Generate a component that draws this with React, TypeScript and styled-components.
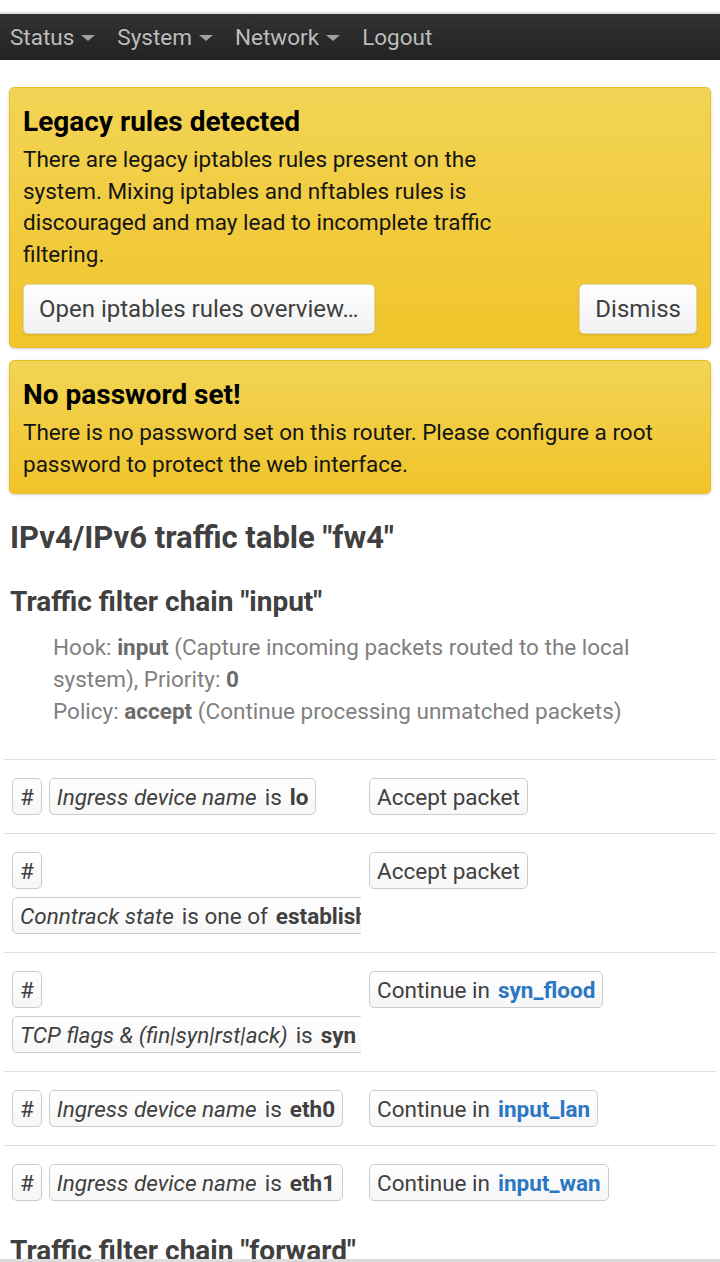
import React from 'react';
import styled, { createGlobalStyle } from 'styled-components';

// グローバルスタイル
const GlobalStyle = createGlobalStyle`
    html, body {
        margin: 0;
        padding: 0;
        background: #fff;
    }
    body {
        font-family: Roboto, "Liberation Sans", Arial, sans-serif;
        font-size: 22.5px;
        color: #404040;
    }
    * {
        box-sizing: border-box;
    }
`;

// ナビゲーション
const TopStrip = styled.div`
    height: 14px;
    background: #fff;
    border-bottom: 2px solid #e2e2e2;
`;

const NavBar = styled.nav`
    height: 46px;
    background: linear-gradient(#333333, #222222);
    display: flex;
    align-items: center;
    padding: 0 10px;
    gap: 22px;
`;

const NavItem = styled.a`
    color: #bdbdbd;
    font-size: 22.5px;
    text-decoration: none;
    display: flex;
    align-items: center;
    gap: 7px;
    text-shadow: 0 -1px 0 rgba(0, 0, 0, 0.25);
`;

const Caret = styled.span`
    display: inline-block;
    width: 0;
    height: 0;
    border-left: 7px solid transparent;
    border-right: 7px solid transparent;
    border-top: 6px solid #a0a0a0;
    margin-top: 2px;
`;

const Main = styled.main`
    padding: 27px 4px 0;
`;

// 警告
const Alert = styled.div`
    margin: 0 5px 12px;
    padding: 19px 13px 13px;
    background: linear-gradient(#f2d455, #f0c42a);
    border: 1px solid #e6bd2a;
    border-radius: 5px;
    box-shadow: 0 1px 3px rgba(0, 0, 0, 0.18);
    color: #151515;
`;

const AlertTitle = styled.h4`
    margin: 0 0 7px;
    font-size: 28px;
    line-height: 30px;
    font-weight: 700;
    color: #000;
`;

const AlertText = styled.p<{ $narrow?: boolean }>`
    margin: 0;
    line-height: 31.7px;
    max-width: ${(p) => (p.$narrow ? '520px' : 'none')};
`;

const AlertActions = styled.div`
    display: flex;
    justify-content: space-between;
    margin-top: 13px;
`;

const Button = styled.button`
    height: 50px;
    padding: 0 15px;
    font-family: inherit;
    font-size: 24px;
    color: #404040;
    background: linear-gradient(#ffffff, #f1f1f1);
    border: 1px solid #e0d7b5;
    border-radius: 5px;
    box-shadow: 0 1px 2px rgba(0, 0, 0, 0.12);
`;

// 見出し
const TableTitle = styled.h2`
    margin: 24px 6px 0;
    font-size: 31px;
    line-height: 40px;
    font-weight: 700;
`;

const ChainTitle = styled.h3<{ $gap: number }>`
    margin: ${(p) => p.$gap}px 6px 0;
    font-size: 28px;
    line-height: 36px;
    font-weight: 700;
`;

const ChainInfo = styled.div`
    margin: 12px 0 0 49px;
    color: #808080;
    line-height: 31.7px;
    padding-right: 20px;

    b {
        color: #6b6b6b;
    }
`;

// ルールテーブル
const RuleTable = styled.div`
    margin-top: 32px;
`;

const RuleRow = styled.div<{ $last?: boolean }>`
    display: grid;
    grid-template-columns: 357px 1fr;
    border-top: ${(p) => (p.$last ? 'none' : '1px solid #dddddd')};
`;

const MatchCell = styled.div`
    overflow: hidden;
    padding: 18px 0 18px 8px;
    display: flex;
    flex-wrap: wrap;
    gap: 8px 7px;
    align-content: flex-start;
`;

const ActionCell = styled.div`
    padding: 18px 8px;
    display: flex;
    align-items: flex-start;
`;

const Badge = styled.span`
    display: inline-flex;
    align-items: center;
    gap: 8px;
    height: 37px;
    padding: 0 7px;
    white-space: nowrap;
    flex-shrink: 0;
    border: 1px solid #cccccc;
    border-radius: 5px;
    background: linear-gradient(#ffffff, #f6f6f6);
    color: #404040;

    i {
        font-style: italic;
    }
    b {
        font-weight: 700;
    }
`;

const ChainLink = styled.a`
    color: #2a77c2;
    font-weight: 700;
    text-decoration: none;
`;

const BottomLine = styled.div`
    position: fixed;
    left: 0;
    right: 0;
    bottom: 0;
    height: 3px;
    background: #dcdcdc;
`;

interface Rule {
    label: string;
    op: string;
    value: string;
    action: string;
    target?: string;
}

const rules: Rule[] = [
    { label: 'Ingress device name', op: 'is', value: 'lo', action: 'Accept packet' },
    { label: 'Conntrack state', op: 'is one of', value: 'established, related', action: 'Accept packet' },
    { label: 'TCP flags & (fin|syn|rst|ack)', op: 'is', value: 'syn', action: 'Continue in', target: 'syn_flood' },
    { label: 'Ingress device name', op: 'is', value: 'eth0', action: 'Continue in', target: 'input_lan' },
    { label: 'Ingress device name', op: 'is', value: 'eth1', action: 'Continue in', target: 'input_wan' },
];

export default function App() {
    return (
        <>
            <GlobalStyle />
            <TopStrip />
            <NavBar>
                <NavItem>Status <Caret /></NavItem>
                <NavItem>System <Caret /></NavItem>
                <NavItem>Network <Caret /></NavItem>
                <NavItem>Logout</NavItem>
            </NavBar>
            <Main>
                <Alert>
                    <AlertTitle>Legacy rules detected</AlertTitle>
                    <AlertText $narrow>
                        There are legacy iptables rules present on the system. Mixing iptables and nftables rules is discouraged and may lead to incomplete traffic filtering.
                    </AlertText>
                    <AlertActions>
                        <Button>Open iptables rules overview…</Button>
                        <Button>Dismiss</Button>
                    </AlertActions>
                </Alert>
                <Alert>
                    <AlertTitle>No password set!</AlertTitle>
                    <AlertText>
                        There is no password set on this router. Please configure a root password to protect the web interface.
                    </AlertText>
                </Alert>

                <TableTitle>IPv4/IPv6 traffic table "fw4"</TableTitle>
                <ChainTitle $gap={26}>Traffic filter chain "input"</ChainTitle>
                <ChainInfo>
                    Hook: <b>input</b> (Capture incoming packets routed to the local system), Priority: <b>0</b>
                    <br />
                    Policy: <b>accept</b> (Continue processing unmatched packets)
                </ChainInfo>

                <RuleTable>
                    {rules.map((r, i) => (
                        <RuleRow key={i}>
                            <MatchCell>
                                <Badge>#</Badge>
                                <Badge>
                                    <i>{r.label}</i>
                                    <span>{r.op}</span>
                                    <b>{r.value}</b>
                                </Badge>
                            </MatchCell>
                            <ActionCell>
                                <Badge>
                                    <span>{r.action}</span>
                                    {r.target && <ChainLink>{r.target}</ChainLink>}
                                </Badge>
                            </ActionCell>
                        </RuleRow>
                    ))}
                </RuleTable>

                <ChainTitle $gap={14}>Traffic filter chain "forward"</ChainTitle>
            </Main>
            <BottomLine />
        </>
    );
}
